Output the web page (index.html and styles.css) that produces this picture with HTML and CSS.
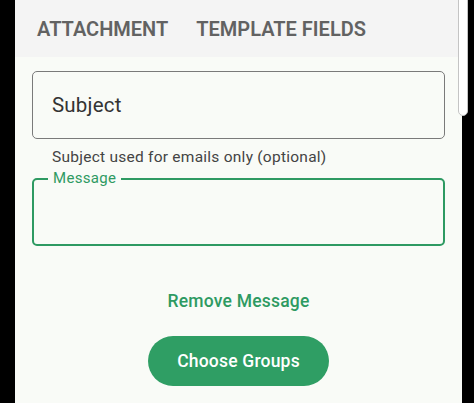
FILE: index.html
```html
<!DOCTYPE html>
<html>
<head>
<meta charset="utf-8">
<link rel="stylesheet" href="styles.css">
</head>
<body>
<div class="screen">
  <div class="frame">
    <div class="tabs">
      <span class="tab">ATTACHMENT</span>
      <span class="tab">TEMPLATE FIELDS</span>
    </div>
    <div class="content">
      <div class="field subject"><span class="placeholder">Subject</span></div>
      <div class="helper">Subject used for emails only (optional)</div>
      <div class="field message"><span class="label">Message</span></div>
      <div class="remove">Remove Message</div>
      <div class="btn-row"><button class="choose">Choose Groups</button></div>
    </div>
    <div class="scroll-thumb"></div>
  </div>
</div>
</body>
</html>
```
FILE: styles.css
```css
html, body {
  margin: 0;
  padding: 0;
  background: #000;
  font-family: Roboto, "Noto Sans", sans-serif;
}
.screen {
  width: 474px;
  height: 403px;
  display: flex;
  padding-left: 15px;
  box-sizing: border-box;
  overflow: hidden;
}
.frame {
  position: relative;
  width: 447px;
  height: 403px;
  background: #f9fbf7;
  display: flex;
  flex-direction: column;
}
.tabs {
  height: 57px;
  background: #f4f4f4;
  display: flex;
  align-items: center;
  gap: 28px;
  padding-left: 22px;
  box-sizing: border-box;
}
.tab {
  font-size: 20px;
  font-weight: 600;
  color: #626262;
  letter-spacing: 0;
}
.content {
  padding: 14px 17px 0 17px;
  display: flex;
  flex-direction: column;
}
.field {
  position: relative;
  box-sizing: border-box;
  border-radius: 5px;
}
.subject {
  height: 68px;
  border: 1px solid #7a7a7a;
  display: flex;
  align-items: center;
  padding-left: 19px;
}
.placeholder {
  font-size: 20.5px;
  color: #333;
  letter-spacing: 0.2px;
}
.helper {
  font-size: 15.5px;
  color: #444;
  padding-left: 20px;
  margin-top: 8px;
  height: 20px;
  line-height: 20px;
  letter-spacing: 0.25px;
}
.message {
  margin-top: 11px;
  height: 68px;
  border: 2px solid #2e9a62;
}
.label {
  position: absolute;
  left: 14px;
  top: -11px;
  padding: 0 5px;
  background: #f9fbf7;
  font-size: 15px;
  line-height: 18px;
  color: #2e9a62;
  letter-spacing: 0.3px;
}
.remove {
  margin-top: 45px;
  text-align: center;
  font-size: 17.5px;
  font-weight: 500;
  color: #2e9a62;
  line-height: 20px;
  letter-spacing: 0.2px;
}
.btn-row {
  display: flex;
  justify-content: center;
  margin-top: 25px;
}
.choose {
  width: 181px;
  height: 50px;
  border: none;
  border-radius: 25px;
  background: #2f9e64;
  color: #fff;
  font-family: Roboto, "Noto Sans", sans-serif;
  font-size: 17.5px;
  font-weight: 500;
  letter-spacing: 0.2px;
}
.scroll-thumb {
  position: absolute;
  right: -6px;
  top: -10px;
  width: 10px;
  height: 126px;
  border: 1px solid #c4c4c4;
  border-radius: 5px;
  background: #fff;
  box-sizing: border-box;
}
```
